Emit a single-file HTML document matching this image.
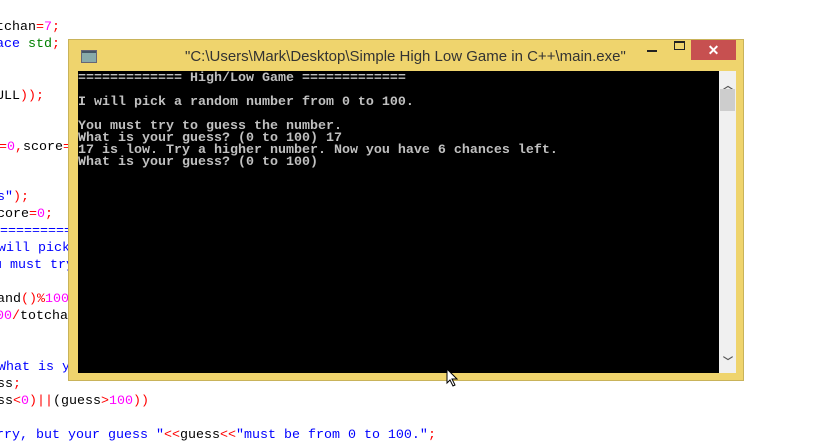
<!DOCTYPE html>
<html><head><style>
body{margin:0;width:822px;height:446px;background:#fff;position:relative;overflow:hidden;font-family:"Liberation Mono",monospace}
.c{position:absolute;left:0;font-size:13.33px;line-height:17px;white-space:pre;color:#000;margin-top:1px}
.b{color:#0000ff}.r{color:#ff0000}.m{color:#ff00ff}.g{color:#008000}
#win{position:absolute;left:68px;top:39px;width:676px;height:342px;background:#efd46d;border:1px solid #c9b35a;box-sizing:border-box}
#title{position:absolute;left:116px;top:8px;font-family:"Liberation Sans",sans-serif;font-size:15px;color:#333}
#con{position:absolute;left:9px;top:31px;width:641px;height:302px;background:#000}
#con pre{margin:0;position:absolute;left:0;top:2px;font-family:"Liberation Mono",monospace;font-weight:bold;font-size:13.33px;line-height:12px;color:#c0c0c0}
#sb{position:absolute;left:650px;top:31px;width:17px;height:302px;background:#f0f0f0}
#close{position:absolute;left:622px;top:0;width:45px;height:20px;background:#c75050;color:#fff;text-align:center;font:bold 14px/20px "Liberation Sans",sans-serif}
</style></head><body>
<div class="c" style="top:18px;left:-4px"><span>tchan</span><span class="r">=</span><span class="m">7</span><span class="r">;</span></div>
<div class="c" style="top:35px;left:-4px"><span class="b">ace</span> <span class="g">std</span><span class="r">;</span></div>
<div class="c" style="top:87px;left:-4px">ULL<span class="r">));</span></div>
<div class="c" style="top:138px;left:-1px"><span class="r">=</span><span class="m">0</span><span class="r">,</span>score<span class="r">=</span></div>
<div class="c" style="top:188px;left:-3px"><span class="b">s"</span><span class="r">);</span></div>
<div class="c" style="top:205px;left:-3px">core<span class="r">=</span><span class="m">0</span><span class="r">;</span></div>
<div class="c b" style="top:222px;left:0">==========</div>
<div class="c b" style="top:239px;left:-2px">will pick</div>
<div class="c b" style="top:256px;left:-6px">u must try</div>
<div class="c" style="top:290px;left:-3px">and<span class="r">()%</span><span class="m">100</span></div>
<div class="c" style="top:307px;left:-4px"><span class="m">00</span><span class="r">/</span>totcha</div>
<div class="c b" style="top:358px;left:-2px">What is yo</div>
<div class="c" style="top:375px;left:-3px">ss<span class="r">;</span></div>
<div class="c" style="top:392px;left:-3px">ss<span class="r">&lt;</span><span class="m">0</span><span class="r">)||</span>(guess<span class="r">&gt;</span><span class="m">100</span><span class="r">))</span></div>
<div class="c" style="top:426px;left:-4px"><span class="b">rry, but your guess "</span><span class="r">&lt;&lt;</span>guess<span class="r">&lt;&lt;</span><span class="b">"must be from 0 to 100."</span><span class="r">;</span></div>

<div id="win">
<div style="position:absolute;left:12px;top:10px;width:14px;height:11px;background:#8aa;border:1px solid #667"><div style="position:absolute;left:0;top:0;width:14px;height:2px;background:#456"></div></div>
<div id="title">"C:\Users\Mark\Desktop\Simple High Low Game in C++\main.exe"</div>
<div style="position:absolute;left:578px;top:10px;width:10px;height:2px;background:#222"></div>
<div style="position:absolute;left:605px;top:1px;width:9px;height:6px;border:1px solid #222;border-top-width:2px"></div>
<div id="close">✕</div>
<div id="con"><pre>============= High/Low Game =============

I will pick a random number from 0 to 100.

You must try to guess the number.
What is your guess? (0 to 100) 17
17 is low. Try a higher number. Now you have 6 chances left.
What is your guess? (0 to 100)</pre></div>
<div id="sb">
<div style="position:absolute;left:4px;top:6px;font:bold 10px 'Liberation Sans',sans-serif;color:#555">︿</div>
<div style="position:absolute;left:1px;top:18px;width:15px;height:22px;background:#cdcdcd"></div>
<div style="position:absolute;left:4px;top:282px;font:bold 10px 'Liberation Sans',sans-serif;color:#555">﹀</div>
</div>
</div>
<svg style="position:absolute;left:446px;top:368px" width="14" height="20"><path d="M1 1 L1 15 L4 12 L7 18 L9 17 L6 11 L11 11 Z" fill="#fff" stroke="#000"/></svg>
</body></html>
